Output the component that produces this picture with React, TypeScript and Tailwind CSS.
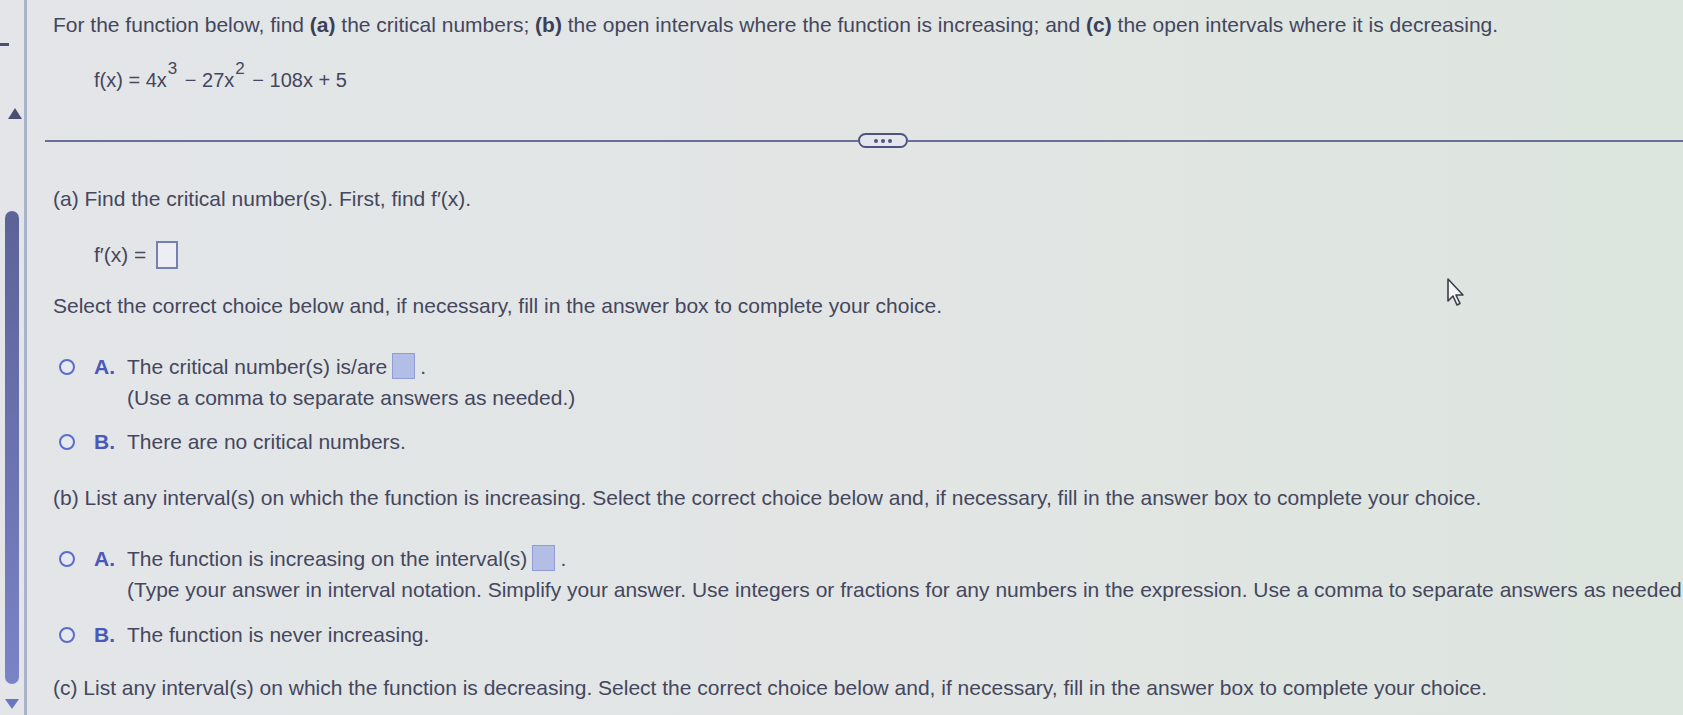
import React from 'react'

const font = { fontFamily: '"Liberation Sans", Arial, sans-serif' }

function Radio() {
	return <span className="inline-block w-[16px] h-[16px] rounded-full border-2 border-[#5b6ccb] bg-[#e6e9f0] shrink-0" />
}

function BlueBox() {
	return <span className="inline-block align-middle w-[23px] h-[26px] bg-[#b3bee6] border border-[#8f9cd6] mx-[5px] -mt-[4px]" />
}

interface OptionProps {
	letter: string,
	children: React.ReactNode,
	note?: string,
}

function Option({letter, children, note}: OptionProps) {
	return (
		<div className="flex items-start">
			<div className="w-[41px] h-[31px] flex items-center pl-[6px]">
				<Radio/>
			</div>
			<div className="w-[33px] font-bold text-[#4a58b8]">{letter}</div>
			<div className="flex flex-col">
				<div className="whitespace-nowrap">{children}</div>
				{note && <div className="whitespace-nowrap">{note}</div>}
			</div>
		</div>
	)
}

function Sup({children}: {children: React.ReactNode}) {
	return <span className="relative -top-[13px] text-[17px] ml-[1px] mr-[2px]">{children}</span>
}

export default function App() {
	return (
		<main style={font} className="relative flex w-[1683px] h-[715px] overflow-hidden bg-[linear-gradient(90deg,#e3e5e8_0%,#e2e5e4_55%,#dde5df_100%)] text-[#44475d] text-[21px] leading-[31px]">
			{/* left gutter with scroll bar */}
			<aside className="w-[29px] shrink-0 flex">
				<div className="w-[24px] flex flex-col">
					<div className="mt-[43px] w-[9px] h-[3px] bg-[#4a4f7a]"/>
					<div className="mt-[62px] ml-[8px] w-0 h-0 border-l-[7px] border-r-[7px] border-b-[11px] border-l-transparent border-r-transparent border-b-[#4a4f72]"/>
					<div className="mt-[92px] ml-[5px] w-[14px] h-[473px] rounded-full bg-[linear-gradient(180deg,#5d6398_0%,#6a72b0_50%,#7a83c6_100%)]"/>
					<div className="mt-[15px] ml-[5px] w-0 h-0 border-l-[7px] border-r-[7px] border-t-[10px] border-l-transparent border-r-transparent border-t-[#6a76c0]"/>
				</div>
				<div className="w-[3px] h-full bg-[#aab3ca]"/>
			</aside>

			<section className="flex-1 flex flex-col pl-[16px]">
				<div className="pl-[8px] pt-[9px] whitespace-nowrap">
					For the function below, find <b className="text-[#3c3f58]">(a)</b> the critical numbers; <b className="text-[#3c3f58]">(b)</b> the open intervals where the function is increasing; and <b className="text-[#3c3f58]">(c)</b> the open intervals where it is decreasing.
				</div>

				<div className="pl-[49px] mt-[25px] whitespace-nowrap text-[20px]">
					f(x) = 4x<Sup>3</Sup> − 27x<Sup>2</Sup> − 108x + 5
				</div>

				<div className="mt-[36px] flex items-center">
					<div className="w-[813px] h-[2px] bg-[#6a6f98]"/>
					<div className="w-[50px] h-[15px] rounded-full border-2 border-[#4d5485] bg-[#e4e6ec] flex items-center justify-center gap-[3px]">
						<span className="w-[4px] h-[4px] rounded-full bg-[#4d5485]"/>
						<span className="w-[4px] h-[4px] rounded-full bg-[#4d5485]"/>
						<span className="w-[4px] h-[4px] rounded-full bg-[#4d5485]"/>
					</div>
					<div className="flex-1 h-[2px] bg-[#6a6f98]"/>
				</div>

				<div className="pl-[8px] mt-[35px] whitespace-nowrap">(a) Find the critical number(s). First, find f′(x).</div>

				<div className="pl-[49px] mt-[25px] whitespace-nowrap flex items-center">
					f′(x) =
					<span className="inline-block w-[22px] h-[28px] border-2 border-[#7580b0] bg-[#eceef3] ml-[10px]"/>
				</div>

				<div className="pl-[8px] mt-[20px] whitespace-nowrap">Select the correct choice below and, if necessary, fill in the answer box to complete your choice.</div>

				<div className="pl-[8px] mt-[30px] flex flex-col gap-[13px]">
					<Option letter="A." note="(Use a comma to separate answers as needed.)">
						The critical number(s) is/are<BlueBox/>.
					</Option>
					<Option letter="B.">There are no critical numbers.</Option>
				</div>

				<div className="pl-[8px] mt-[25px] whitespace-nowrap">(b) List any interval(s) on which the function is increasing. Select the correct choice below and, if necessary, fill in the answer box to complete your choice.</div>

				<div className="pl-[8px] mt-[30px] flex flex-col gap-[14px]">
					<Option letter="A." note="(Type your answer in interval notation. Simplify your answer. Use integers or fractions for any numbers in the expression. Use a comma to separate answers as needed.)">
						The function is increasing on the interval(s)<BlueBox/>.
					</Option>
					<Option letter="B.">The function is never increasing.</Option>
				</div>

				<div className="pl-[8px] mt-[22px] whitespace-nowrap">(c) List any interval(s) on which the function is decreasing. Select the correct choice below and, if necessary, fill in the answer box to complete your choice.</div>
			</section>

			{/* mouse pointer */}
			<svg className="absolute left-[1446px] top-[277px]" width="22" height="30" viewBox="0 0 22 30">
				<path d="M2 2 L2 24 L7 19 L11 28 L14 26.5 L10 18 L17 18 Z" fill="#f4f5f7" stroke="#3a3f4a" strokeWidth="1.6" strokeLinejoin="round"/>
			</svg>
		</main>
	)
}
